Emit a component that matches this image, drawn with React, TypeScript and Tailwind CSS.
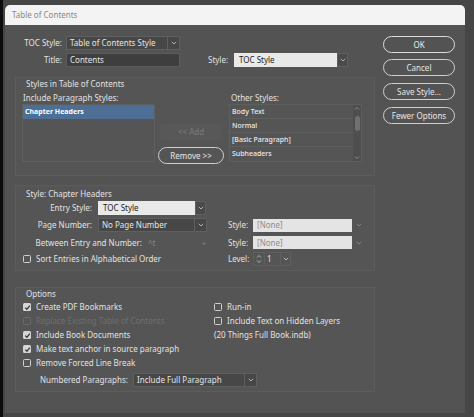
import React from "react";

const Chev = ({ color = "#bdbdbd" }: { color?: string }) => (
  <svg width="6" height="4" viewBox="0 0 6 4">
    <path d="M0.8 0.8 L3 3 L5.2 0.8" fill="none" stroke={color} strokeWidth="0.9" />
  </svg>
);

const CheckBox = ({ checked = false, disabled = false }: { checked?: boolean; disabled?: boolean }) => (
  <div
    className={
      checked
        ? "w-[8px] h-[8px] rounded-[1.5px] bg-[#d6d6d6] flex items-center justify-center"
        : disabled
        ? "w-[8px] h-[8px] rounded-[1.5px] border border-[#6a6a6a]"
        : "w-[8px] h-[8px] rounded-[1.5px] border border-[#cfcfcf]"
    }
  >
    {checked && (
      <svg width="7" height="7" viewBox="0 0 7 7">
        <path d="M1.2 3.6 L2.9 5.2 L5.9 1.6" fill="none" stroke="#3a3a3a" strokeWidth="1.3" />
      </svg>
    )}
  </div>
);

const DarkSelect = ({ text, w, bg = "bg-[#474747]" }: { text: string; w: string; bg?: string }) => (
  <div className="flex h-[14px]">
    <div className={`${w} ${bg} border border-[#5f5f5f] flex items-center pl-[3px] text-[#e4e4e4]`}>{text}</div>
    <div className="w-[12px] bg-[#474747] border border-l-0 border-[#5f5f5f] flex items-center justify-center">
      <Chev />
    </div>
  </div>
);

const LightSelect = ({ text, w }: { text: string; w: string }) => (
  <div className="flex h-[14px]">
    <div className={`${w} bg-[#e9e9e9] flex items-center pl-[5px] text-[#1e1e1e]`}>{text}</div>
    <div className="w-[11px] bg-[#4a4a4a] border border-[#5f5f5f] flex items-center justify-center">
      <Chev />
    </div>
  </div>
);

const Pill = ({ children, strong = false }: { children: React.ReactNode; strong?: boolean }) => (
  <div
    className={
      strong
        ? "w-[72px] h-[17px] rounded-[9px] border-[1.5px] border-[#dcdcdc] flex items-center justify-center text-[#ececec]"
        : "w-[72px] h-[17px] rounded-[9px] border border-[#cfcfcf] flex items-center justify-center text-[#e6e6e6]"
    }
  >
    {children}
  </div>
);

export default function App() {
  return (
    <div
      className="w-[474px] h-[417px] bg-[#464646] flex overflow-hidden whitespace-nowrap text-[8px] leading-[10px] text-[#e2e2e2]"
      style={{ fontFamily: '"Noto Sans", "Open Sans", sans-serif' }}
    >
      <div className="w-[3px] h-full bg-[#0c0c0c]" />
      <div className="ml-[2px] mt-[5px] w-[460px] h-[408px] flex flex-col">
        <div className="h-[20px] bg-[#f3f3f3] rounded-t-[5px] flex items-center pl-[7px] text-[#8a8a8a]">
          Table of Contents
        </div>
        <div className="flex-1 bg-[#535353] flex">
          {/* left column */}
          <div className="ml-[10px] w-[360px] flex flex-col pt-[11px]">
            <div className="flex items-center h-[14px]">
              <div className="w-[47px] text-right">TOC Style:</div>
              <div className="ml-[4px]">
                <DarkSelect text="Table of Contents Style" w="w-[102px]" />
              </div>
            </div>
            <div className="flex items-center h-[14px] mt-[3px]">
              <div className="w-[47px] text-right">Title:</div>
              <div className="ml-[4px] w-[114px] h-[14px] bg-[#3e3e3e] border border-[#5c5c5c] flex items-center pl-[3px] text-[#e6e6e6]">
                Contents
              </div>
              <div className="ml-[28px] w-[22px]">Style:</div>
              <div className="ml-[4px]">
                <LightSelect text="TOC Style" w="w-[103px]" />
              </div>
            </div>

            {/* Box 1 */}
            <div className="mt-[10px] h-[99px] border border-[#5c5c5c] bg-[#555555] flex flex-col">
              <div className="pl-[10px] h-[11px] leading-[11px]">Styles in Table of Contents</div>
              <div className="flex mt-[4px]">
                <div className="ml-[6px] w-[133px] flex flex-col">
                  <div className="h-[10px] pl-[1px]">Include Paragraph Styles:</div>
                  <div className="mt-[1px] h-[58px] border border-[#5e5e5e] bg-[#555555]">
                    <div className="h-[14px] bg-[#4d6f95] flex items-center pl-[2px] text-[7px] font-bold text-white">
                      Chapter Headers
                    </div>
                  </div>
                </div>
                <div className="ml-[3px] w-[66px] flex flex-col items-center">
                  <div className="mt-[31px] w-[62px] h-[16px] bg-[#585858] rounded-[2px] flex items-center justify-center text-[#7c7c7c]">
                    &lt;&lt; Add
                  </div>
                  <div className="mt-[7px] w-[66px] h-[17px] rounded-[9px] border border-[#cfcfcf] flex items-center justify-center text-[#e6e6e6]">
                    Remove &gt;&gt;
                  </div>
                </div>
                <div className="ml-[5px] w-[133px] flex flex-col">
                  <div className="h-[10px] pl-[2px]">Other Styles:</div>
                  <div className="mt-[1px] h-[58px] border border-[#5e5e5e] flex">
                    <div className="flex-1 flex flex-col text-[7px] font-medium text-[#ececec]">
                      {["Body Text", "Normal", "[Basic Paragraph]", "Subheaders"].map((t, i) => (
                        <div
                          key={t}
                          className={
                            i < 3
                              ? "h-[14px] border-b border-[#5e5e5e] flex items-center pl-[2px]"
                              : "h-[14px] flex items-center pl-[2px]"
                          }
                        >
                          {t}
                        </div>
                      ))}
                    </div>
                    <div className="w-[8px] flex flex-col items-center bg-[#4e4e4e]">
                      <svg width="6" height="5" viewBox="0 0 6 5" className="mt-[1px]">
                        <path d="M1 3.5 L3 1.5 L5 3.5" fill="none" stroke="#9a9a9a" strokeWidth="0.8" />
                      </svg>
                      <div className="mt-[5px] w-[5px] h-[15px] rounded-[3px] bg-[#707070]" />
                      <div className="flex-1" />
                      <svg width="6" height="5" viewBox="0 0 6 5" className="mb-[1px]">
                        <path d="M1 1.5 L3 3.5 L5 1.5" fill="none" stroke="#9a9a9a" strokeWidth="0.8" />
                      </svg>
                    </div>
                  </div>
                </div>
              </div>
            </div>

            {/* Box 2 */}
            <div className="mt-[9px] h-[86px] border border-[#5c5c5c] bg-[#555555] flex flex-col">
              <div className="pl-[10px] pt-[3px] h-[13px]">Style: Chapter Headers</div>
              <div className="flex items-center h-[14px] mt-[2px]">
                <div className="w-[76px] text-right">Entry Style:</div>
                <div className="ml-[6px]">
                  <LightSelect text="TOC Style" w="w-[97px]" />
                </div>
              </div>
              <div className="flex items-center h-[14px] mt-[3px]">
                <div className="w-[212px] flex items-center">
                  <div className="w-[76px] text-right">Page Number:</div>
                  <div className="ml-[6px]">
                    <DarkSelect text="No Page Number" w="w-[97px]" />
                  </div>
                </div>
                <div className="w-[21px]">Style:</div>
                <div className="ml-[4px] w-[99px] h-[13px] bg-[#e4e4e4] flex items-center pl-[4px] text-[#8e8e8e]">
                  [None]
                </div>
                <div className="ml-[4px]">
                  <Chev color="#8a8a8a" />
                </div>
              </div>
              <div className="flex items-center h-[13px] mt-[4px]">
                <div className="w-[212px] flex items-center">
                  <div className="w-[126px] text-right">Between Entry and Number:</div>
                  <div className="ml-[4px] w-[54px] h-[12px] flex items-center pl-[2px] text-[#8a8a8a]">^t</div>
                  <div className="ml-[3px] text-[#7a7a7a] text-[6px]">▸</div>
                </div>
                <div className="w-[21px]">Style:</div>
                <div className="ml-[4px] w-[99px] h-[13px] bg-[#e4e4e4] flex items-center pl-[4px] text-[#8e8e8e]">
                  [None]
                </div>
                <div className="ml-[4px]">
                  <Chev color="#8a8a8a" />
                </div>
              </div>
              <div className="flex items-center h-[14px] mt-[3px]">
                <div className="w-[212px] flex items-center">
                  <div className="ml-[7px]">
                    <CheckBox />
                  </div>
                  <div className="ml-[5px]">Sort Entries in Alphabetical Order</div>
                </div>
                <div className="w-[21px]">Level:</div>
                <div className="ml-[4px] flex h-[14px]">
                  <div className="w-[12px] border border-[#5f5f5f] flex flex-col items-center justify-center">
                    <svg width="6" height="10" viewBox="0 0 6 10">
                      <path d="M1 3.5 L3 1.5 L5 3.5 M1 6.5 L3 8.5 L5 6.5" fill="none" stroke="#bdbdbd" strokeWidth="0.9" />
                    </svg>
                  </div>
                  <div className="w-[15px] border-y border-[#5f5f5f] flex items-center pl-[2px]">1</div>
                  <div className="w-[11px] border border-[#5f5f5f] flex items-center justify-center">
                    <Chev />
                  </div>
                </div>
              </div>
            </div>

            {/* Box 3 */}
            <div className="mt-[16px] h-[105px] border border-[#5c5c5c] bg-[#555555] flex flex-col">
              <div className="pl-[10px] pt-[1px] h-[11px]">Options</div>
              <div className="flex mt-[1px]">
                <div className="w-[198px] flex flex-col pl-[7px]">
                  {[
                    ["Create PDF Bookmarks", true, false],
                    ["Replace Existing Table of Contents", false, true],
                    ["Include Book Documents", true, false],
                    ["Make text anchor in source paragraph", true, false],
                    ["Remove Forced Line Break", false, false],
                  ].map(([t, c, d]) => (
                    <div key={t as string} className="h-[14px] flex items-center">
                      <CheckBox checked={c as boolean} disabled={d as boolean} />
                      <div className={d ? "ml-[5px] text-[#6e6e6e]" : "ml-[5px]"}>{t as string}</div>
                    </div>
                  ))}
                </div>
                <div className="flex flex-col">
                  <div className="h-[14px] flex items-center">
                    <CheckBox />
                    <div className="ml-[5px]">Run-in</div>
                  </div>
                  <div className="h-[14px] flex items-center">
                    <CheckBox />
                    <div className="ml-[5px]">Include Text on Hidden Layers</div>
                  </div>
                  <div className="h-[14px] flex items-center">(20 Things Full Book.indb)</div>
                </div>
              </div>
              <div className="flex items-center h-[14px] mt-[3px]">
                <div className="ml-[24px] w-[93px]">Numbered Paragraphs:</div>
                <div>
                  <DarkSelect text="Include Full Paragraph" w="w-[112px]" />
                </div>
              </div>
            </div>
          </div>

          {/* right buttons */}
          <div className="ml-[8px] flex flex-col pt-[11px]">
            <Pill strong>OK</Pill>
            <div className="mt-[6px]">
              <Pill>Cancel</Pill>
            </div>
            <div className="mt-[7px]">
              <Pill>Save Style...</Pill>
            </div>
            <div className="mt-[7px]">
              <Pill>Fewer Options</Pill>
            </div>
          </div>
        </div>
      </div>
    </div>
  );
}
